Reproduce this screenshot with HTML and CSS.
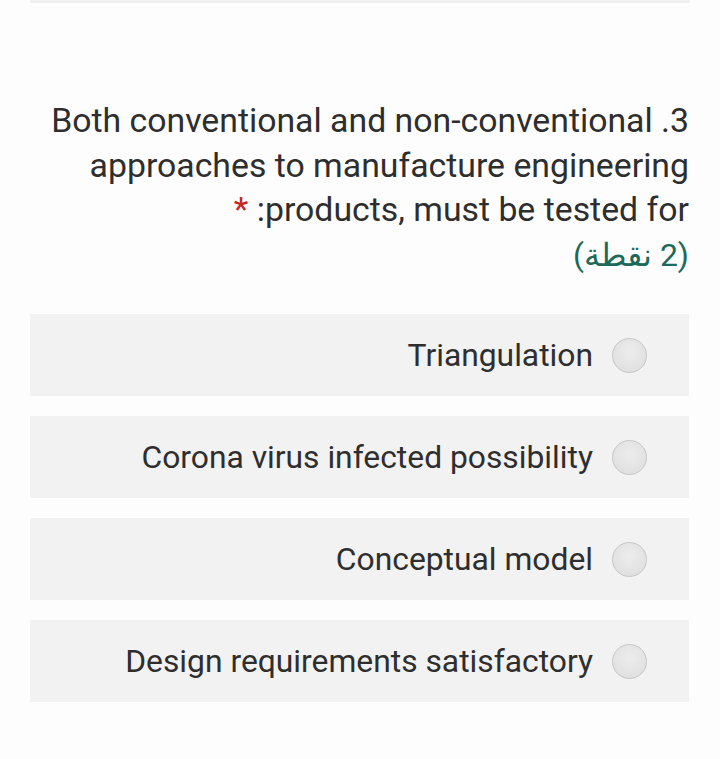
FILE: index.html
```html
<!DOCTYPE html>
<html lang="ar" dir="rtl">
<head>
<meta charset="utf-8">
<link rel="stylesheet" href="styles.css">
</head>
<body>
<div class="topline"></div>
<div class="question">
  <div class="title">3. Both conventional and non-conventional approaches to manufacture engineering products, must be tested for: <span class="req">*</span></div>
  <div class="points">(2 نقطة)</div>
</div>
<div class="options">
  <label class="option"><span class="radio"></span><span class="text">Triangulation</span></label>
  <label class="option"><span class="radio"></span><span class="text">Corona virus infected possibility</span></label>
  <label class="option"><span class="radio"></span><span class="text">Conceptual model</span></label>
  <label class="option"><span class="radio"></span><span class="text">Design requirements satisfactory</span></label>
</div>
</body>
</html>
```
FILE: styles.css
```css
html, body {
  margin: 0;
  padding: 0;
  background: #fdfdfd;
}
body {
  font-family: Roboto, "Noto Sans", sans-serif;
  color: #2e2e2e;
  width: 720px;
}
.topline {
  height: 3px;
  margin: 0 30px;
  background: #f0f0f0;
}
.question {
  padding: 96px 31px 0 40px;
  text-align: right;
}
.title {
  font-size: 33.8px;
  line-height: 44.5px;
}
.req {
  color: #c8261f;
}
.points {
  font-size: 32px;
  line-height: 44.5px;
  color: #1d6a5a;
}
.options {
  margin-top: 37px;
  display: flex;
  flex-direction: column;
  gap: 20px;
  padding: 0 31px 0 30px;
}
.option {
  height: 82px;
  background: #f2f2f2;
  display: flex;
  align-items: center;
  padding-right: 42px;
  gap: 19px;
}
.radio {
  width: 33px;
  height: 33px;
  border-radius: 50%;
  border: 1px solid #c6c6c6;
  background: radial-gradient(circle at 50% 40%, #ededed, #dcdcdc);
  flex: none;
}
.text {
  font-size: 31.8px;
  color: #2e2e2e;
}
```
